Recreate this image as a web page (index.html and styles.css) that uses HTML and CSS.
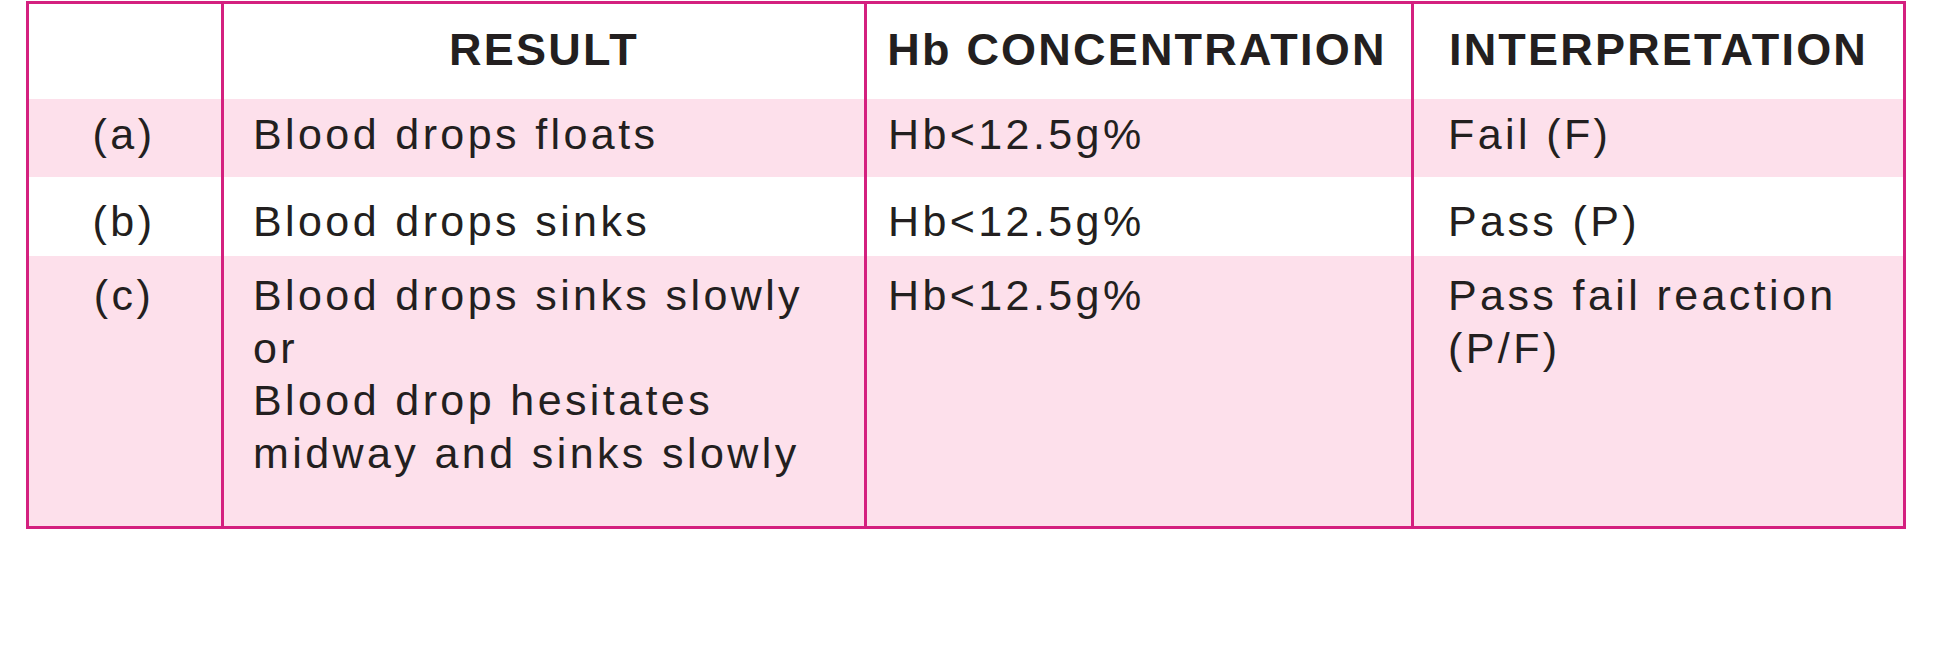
FILE: index.html
```html
<!DOCTYPE html>
<html lang="en">
<head>
<meta charset="utf-8">
<title>Hb test interpretation</title>
<link rel="stylesheet" href="styles.css">
</head>
<body>
<div class="table">
  <div class="row head">
    <div class="cell c0"></div>
    <div class="cell c1">RESULT</div>
    <div class="cell c2">Hb CONCENTRATION</div>
    <div class="cell c3">INTERPRETATION</div>
  </div>
  <div class="row pink ra">
    <div class="cell c0">(a)</div>
    <div class="cell c1">Blood drops floats</div>
    <div class="cell c2">Hb&lt;12.5g%</div>
    <div class="cell c3">Fail (F)</div>
  </div>
  <div class="row rb">
    <div class="cell c0">(b)</div>
    <div class="cell c1">Blood drops sinks</div>
    <div class="cell c2">Hb&lt;12.5g%</div>
    <div class="cell c3">Pass (P)</div>
  </div>
  <div class="row pink rc">
    <div class="cell c0">(c)</div>
    <div class="cell c1">Blood drops sinks slowly<br>or<br>Blood drop hesitates<br>midway and sinks slowly</div>
    <div class="cell c2">Hb&lt;12.5g%</div>
    <div class="cell c3">Pass fail reaction<br>(P/F)</div>
  </div>
</div>
</body>
</html>
```

FILE: styles.css
```css
html, body {
  margin: 0;
  padding: 0;
  background: #ffffff;
}

body {
  font-family: "Liberation Sans", Arial, sans-serif;
  color: #231f20;
}

.table {
  display: grid;
  grid-template-columns: 192px 643px 547px 492px;
  width: max-content;
  margin: 1px 0 0 26px;
  border: 3px solid #d4207f;
}

.row {
  display: contents;
}

.cell {
  box-sizing: border-box;
  font-size: 43px;
  line-height: 52.5px;
  letter-spacing: 3.4px;
  white-space: nowrap;
}

.cell + .cell {
  border-left: 3px solid #d4207f;
}

.pink .cell {
  background: #fde0eb;
}

.c0 {
  text-align: center;
  padding-right: 2px;
}

.c1 {
  padding-left: 29px;
}

.c2 {
  padding-left: 21px;
}

.c3 {
  padding-left: 34px;
}

/* header row */
.head .cell {
  height: 95px;
  padding-top: 23px;
  padding-left: 0;
  font-size: 45px;
  line-height: 45px;
  font-weight: bold;
  letter-spacing: 2.2px;
  text-align: center;
}

.head .c2 {
  padding-right: 4px;
}

.ra .cell {
  height: 78px;
  padding-top: 9px;
}

.rb .cell {
  height: 79px;
  padding-top: 18px;
}

.rc .cell {
  height: 270px;
  padding-top: 13px;
}
```
